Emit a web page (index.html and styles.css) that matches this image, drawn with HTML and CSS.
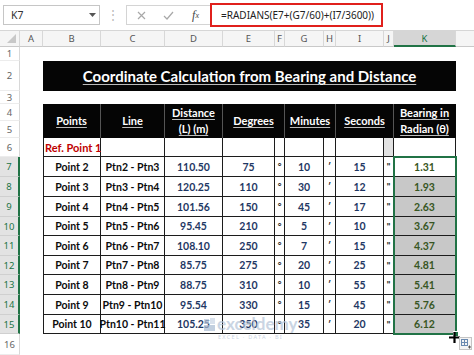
FILE: index.html
```html
<!DOCTYPE html>
<html>
<head>
<meta charset="utf-8">
<link rel="stylesheet" href="styles.css">
</head>
<body>
<div class="toolbar">
  <div class="namebox"><span>K7</span><svg class="dd" width="7" height="4" viewBox="0 0 7 4"><path d="M0 0h7L3.5 4z" fill="#555"/></svg></div>
  <div class="sep">⋮</div>
  <div class="fxgroup">
    <span class="fxbtn xmark"><svg width="9" height="9" viewBox="0 0 9 9"><path d="M1 1l7 7M8 1l-7 7" stroke="#a8a8a8" stroke-width="1.2"/></svg></span>
    <span class="fxbtn"><svg width="11" height="9" viewBox="0 0 11 9"><path d="M1 5l3 3 6-7" stroke="#a8a8a8" stroke-width="1.2" fill="none"/></svg></span>
    <span class="fxbtn fx">f<sub>x</sub></span>
  </div>
  <div class="formula"><div class="formula-hl">=RADIANS(E7+(G7/60)+(I7/3600))</div></div>
</div>

<div class="sheet">
  <!-- column headers -->
  <div class="ch corner"><svg width="9" height="9" viewBox="0 0 9 9"><path d="M9 0V9H0z" fill="#c8c8c8"/></svg></div>
  <div class="ch">A</div><div class="ch">B</div><div class="ch">C</div><div class="ch">D</div><div class="ch">E</div><div class="ch">F</div><div class="ch">G</div><div class="ch">H</div><div class="ch">I</div><div class="ch">J</div><div class="ch chsel">K</div><div class="ch chlast"></div>

  <!-- row 1 -->
  <div class="rh">1</div><div class="blank span12"></div>
  <!-- row 2 -->
  <div class="rh">2</div><div class="blank"></div>
  <div class="title"><span>Coordinate Calculation from Bearing and Distance</span></div>
  <div class="blank"></div>
  <!-- row 3 -->
  <div class="rh">3</div><div class="blank span12"></div>
  <!-- row 4-5 header -->
  <div class="rh">4</div><div class="blank"></div>
  <div class="hd r2"><span>Points</span></div>
  <div class="hd r2"><span>Line</span></div>
  <div class="hd r2 two"><span>Distance</span><span>(L) (m)</span></div>
  <div class="hd r2 c2"><span>Degrees</span></div>
  <div class="hd r2 c2"><span>Minutes</span></div>
  <div class="hd r2 c2"><span>Seconds</span></div>
  <div class="hd r2 two last"><span>Bearing in</span><span>Radian (θ)</span></div>
  <div class="blank"></div>
  <div class="rh">5</div><div class="blank"></div><div class="blank"></div>
  <!-- row 6 -->
  <div class="rh">6</div><div class="blank"></div>
  <div class="tc first ref">Ref. Point 1</div>
  <div class="tc"></div><div class="tc"></div><div class="tc"></div><div class="tc"></div><div class="tc"></div><div class="tc"></div><div class="tc"></div><div class="tc jgray"></div><div class="tc"></div>
  <div class="blank"></div>

  <!-- row 7 -->
  <div class="rh sel">7</div><div class="blank"></div>
  <div class="tc first">Point 2</div><div class="tc">Ptn2 - Ptn3</div><div class="tc num">110.50</div><div class="tc num">75</div><div class="tc sym">°</div><div class="tc num">10</div><div class="tc sym">′</div><div class="tc num">15</div><div class="tc sym">"</div><div class="tc rad">1.31</div>
  <div class="blank"></div>
  <!-- row 8 -->
  <div class="rh sel">8</div><div class="blank"></div>
  <div class="tc first">Point 3</div><div class="tc">Ptn3 - Ptn4</div><div class="tc num">120.25</div><div class="tc num">110</div><div class="tc sym">°</div><div class="tc num">30</div><div class="tc sym">′</div><div class="tc num">12</div><div class="tc sym">"</div><div class="tc rad shade">1.93</div>
  <div class="blank"></div>
  <!-- row 9 -->
  <div class="rh sel">9</div><div class="blank"></div>
  <div class="tc first">Point 4</div><div class="tc">Ptn4 - Ptn5</div><div class="tc num">101.56</div><div class="tc num">150</div><div class="tc sym">°</div><div class="tc num">45</div><div class="tc sym">′</div><div class="tc num">17</div><div class="tc sym">"</div><div class="tc rad shade">2.63</div>
  <div class="blank"></div>
  <!-- row 10 -->
  <div class="rh sel">10</div><div class="blank"></div>
  <div class="tc first">Point 5</div><div class="tc">Ptn5 - Ptn6</div><div class="tc num">95.45</div><div class="tc num">210</div><div class="tc sym">°</div><div class="tc num">5</div><div class="tc sym">′</div><div class="tc num">10</div><div class="tc sym">"</div><div class="tc rad shade">3.67</div>
  <div class="blank"></div>
  <!-- row 11 -->
  <div class="rh sel">11</div><div class="blank"></div>
  <div class="tc first">Point 6</div><div class="tc">Ptn6 - Ptn7</div><div class="tc num">108.10</div><div class="tc num">250</div><div class="tc sym">°</div><div class="tc num">7</div><div class="tc sym">′</div><div class="tc num">15</div><div class="tc sym">"</div><div class="tc rad shade">4.37</div>
  <div class="blank"></div>
  <!-- row 12 -->
  <div class="rh sel">12</div><div class="blank"></div>
  <div class="tc first">Point 7</div><div class="tc">Ptn7 - Ptn8</div><div class="tc num">85.75</div><div class="tc num">275</div><div class="tc sym">°</div><div class="tc num">20</div><div class="tc sym">′</div><div class="tc num">25</div><div class="tc sym">"</div><div class="tc rad shade">4.81</div>
  <div class="blank"></div>
  <!-- row 13 -->
  <div class="rh sel">13</div><div class="blank"></div>
  <div class="tc first">Point 8</div><div class="tc">Ptn8 - Ptn9</div><div class="tc num">88.75</div><div class="tc num">310</div><div class="tc sym">°</div><div class="tc num">10</div><div class="tc sym">′</div><div class="tc num">55</div><div class="tc sym">"</div><div class="tc rad shade">5.41</div>
  <div class="blank"></div>
  <!-- row 14 -->
  <div class="rh sel">14</div><div class="blank"></div>
  <div class="tc first">Point 9</div><div class="tc">Ptn9 - Ptn10</div><div class="tc num">95.54</div><div class="tc num">330</div><div class="tc sym">°</div><div class="tc num">15</div><div class="tc sym">′</div><div class="tc num">45</div><div class="tc sym">"</div><div class="tc rad shade">5.76</div>
  <div class="blank"></div>
  <!-- row 15 -->
  <div class="rh sel">15</div><div class="blank"></div>
  <div class="tc first">Point 10</div><div class="tc">Ptn10 - Ptn11</div><div class="tc num">105.25</div><div class="tc num">350</div><div class="tc sym">°</div><div class="tc num">35</div><div class="tc sym">′</div><div class="tc num">20</div><div class="tc sym">"</div><div class="tc rad shade">6.12</div>
  <div class="blank"></div>
  <!-- row 16 -->
  <div class="rh">16</div><div class="blank span12"></div>

  <!-- overlays -->
  <div class="watermark">
    <div class="wm-main"><svg class="wm-logo" width="11" height="13" viewBox="0 0 11 13"><rect x="0" y="1" width="5" height="5" fill="#b7c6da"/><rect x="6" y="0" width="5" height="6" fill="#c9d5e4"/><rect x="0" y="7" width="11" height="6" fill="#a9bbd2"/></svg><span>exceldemy</span></div>
    <div class="wm-sub">EXCEL · DATA · BI</div>
  </div>
  <div class="selection"></div>
  <div class="handle"></div>
  <svg class="cursor" width="11" height="11" viewBox="0 0 11 11"><path d="M5.5 0v11M0 5.5h11" stroke="#000" stroke-width="2.2"/></svg>
  <svg class="quick" width="13" height="13" viewBox="0 0 13 13"><rect x="0.5" y="0.5" width="12" height="12" fill="#f4f4f4" stroke="#c4c4c4"/><rect x="2.5" y="2.5" width="6" height="6" fill="none" stroke="#6a8ab0"/><path d="M2.5 5.5h6M5.5 2.5v6" stroke="#6a8ab0"/><path d="M9 10h3M10.5 8.5v3" stroke="#555" stroke-width="1"/></svg>
</div>
</body>
</html>
```

FILE: styles.css
```css
* { box-sizing: border-box; margin: 0; padding: 0; }
html, body { margin: 0; background: #fff; }
body { width: 474px; height: 355px; overflow: hidden; font-family: "Noto Sans", "Open Sans", sans-serif; }

.toolbar {
  height: 31px;
  display: flex;
  align-items: center;
  padding-left: 3px;
  background: #fff;
  border-bottom: 1px solid #d6d6d6;
}
.namebox {
  width: 97px; height: 20px;
  border: 1px solid #c6c6c6;
  display: flex; align-items: center; justify-content: space-between;
  padding: 0 3px 0 7px;
  font-size: 10.5px; color: #333;
}
.sep { width: 26px; text-align: center; color: #b8b8b8; font-size: 12px; line-height: 20px; }
.fxgroup {
  width: 84px; height: 20px;
  border: 1px solid #d4d4d4; border-right: none;
  display: flex; align-items: center;
}
.fxbtn { width: 27px; display: flex; justify-content: center; align-items: center; }
.fxbtn.xmark { margin-left: 1px; }
.fx { font-family: "Liberation Serif", serif; font-style: italic; font-size: 12px; color: #444; }
.fx sub { font-size: 8px; vertical-align: -1px; }
.formula {
  flex: 1; height: 24px;
  display: flex; align-items: center;
}
.formula-hl {
  width: 173px; height: 24px;
  border: 2px solid #e0201c;
  padding-left: 9px;
  font-size: 10px; line-height: 20px; color: #222;
  white-space: nowrap;
}

.sheet {
  position: relative;
  display: grid;
  grid-template-columns: 20px 23px 58px 64px 58px 52px 10px 39px 12px 48px 10px 62px 18px;
  grid-template-rows: 16px 14px 30px 13px 17px 17px 19px 20px 20px 20px 19px 20px 19px 20px 20px 19px 21px;
  font-family: "Lato", "Noto Sans", sans-serif;
}

.ch {
  background: #f5f5f5;
  border-right: 1px solid #d8d8d8;
  border-bottom: 1px solid #c9c9c9;
  font-family: "Noto Sans", sans-serif;
  font-size: 9.5px; color: #555;
  display: flex; align-items: center; justify-content: center;
}
.corner { justify-content: flex-end; align-items: flex-end; padding: 0 3px 3px 0; }
.chsel { background: #d6d6d6; color: #217346; border-bottom: 2px solid #217346; }
.chlast { border-right: none; }

.rh {
  border-right: 1px solid #d8d8d8;
  border-bottom: 1px solid #ececec;
  font-family: "Noto Sans", sans-serif;
  font-size: 9.5px; color: #666;
  display: flex; align-items: center; justify-content: center;
}
.rh.sel { background: #e3e3e3; color: #217346; border-right: 2px solid #217346; border-bottom-color: #d0d0d0; }

.blank { background: #fff; }
.span12 { grid-column: span 12; }

.title {
  grid-column: span 10;
  background: #050505;
  color: #fff;
  font-weight: 700; font-size: 15px;
  display: flex; align-items: center; justify-content: center;
}
.title span { text-decoration: underline; text-decoration-thickness: 1px; text-underline-offset: 2px; text-decoration-color: #bbb; }

.hd {
  background: #050505;
  color: #fff;
  font-weight: 700; font-size: 11px;
  border-right: 1px solid #555;
  display: flex; flex-direction: column; align-items: center; justify-content: center;
  line-height: 16px;
}
.hd span { text-decoration: underline; text-decoration-thickness: 1px; text-underline-offset: 2px; text-decoration-color: #bbb; }
.hd.last { border-right: 1px solid #050505; }
.r2 { grid-row: span 2; }
.c2 { grid-column: span 2; }

.tc {
  border-right: 1px solid #1c1c1c;
  border-bottom: 1px solid #1c1c1c;
  font-weight: 700; font-size: 10.5px; color: #0c0c0c;
  display: flex; align-items: center; justify-content: center;
  white-space: nowrap;
}
.tc.first { border-left: 1px solid #1c1c1c; }
.ref { color: #c00000; font-size: 11px; justify-content: flex-start; padding-left: 1px; }
.num { color: #1f3864; }
.sym { font-size: 9px; color: #222; }
.rad { color: #375623; }
.shade { background: #c8c8c8; }
.jgray { background: #e2e2e2; }

.watermark {
  position: absolute;
  left: 204px; top: 284px;
  opacity: 0.7;
  pointer-events: none;
}
.wm-main { display: flex; align-items: center; gap: 2px; font-family: "Lato", sans-serif; font-weight: 700; font-size: 17px; color: #b4c4d8; line-height: 18px; }
.wm-sub { font-family: "Noto Sans", sans-serif; font-size: 5.5px; letter-spacing: 1.3px; color: #b4c4d8; padding-left: 14px; line-height: 8px; }

.selection {
  position: absolute;
  left: 393px; top: 125px;
  width: 64px; height: 179px;
  border: 2px solid #217346;
}
.handle {
  position: absolute;
  left: 453px; top: 300px;
  width: 6px; height: 6px;
  background: #217346;
  border: 1px solid #fff;
}
.cursor { position: absolute; left: 449px; top: 301px; }
.quick { position: absolute; left: 459px; top: 306px; }
```
